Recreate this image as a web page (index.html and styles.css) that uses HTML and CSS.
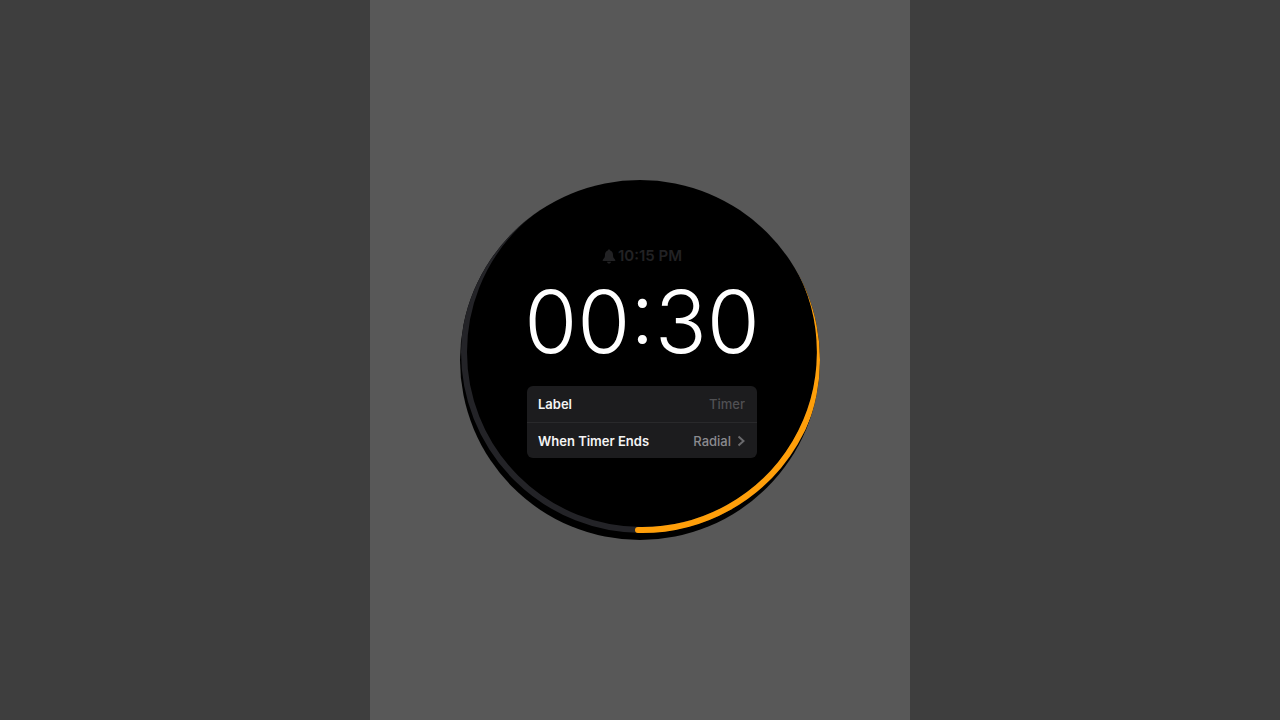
FILE: index.html
```
<!DOCTYPE html>
<html lang="en">

<head>
    <meta charset="UTF-8" />
    <meta name="viewport" content="width=device-width, initial-scale=1.0" />
    <title>Timer</title>
    <link rel="stylesheet" href="styles.css">
</head>

<body>
    <main class="stage">
        <div class="dial">
            <svg class="ring" viewBox="0 0 360 360" aria-hidden="true">
                <circle class="ring-track" cx="182" cy="172" r="178" />
                <path class="ring-progress" d="M178 350 A178 178 0 0 0 336 83" />
            </svg>

            <div class="content">
                <p class="end-time">
                    <svg class="bell" viewBox="0 0 14 15" aria-hidden="true">
                        <path d="M7 0.5C6.2 0.5 5.7 1 5.6 1.7C3.8 2.3 3 3.8 3 5.8C3 8.3 2.5 9 1.2 10.2C0.2 11.2 0.4 12 1.5 12H12.5C13.6 12 13.8 11.2 12.8 10.2C11.5 9 11 8.3 11 5.8C11 3.8 10.2 2.3 8.4 1.7C8.3 1 7.8 0.5 7 0.5Z" />
                        <path d="M5 12.8H9C8.8 14 8 14.6 7 14.6C6 14.6 5.2 14 5 12.8Z" />
                    </svg>
                    <span>10:15 PM</span>
                </p>
                <h1 class="time">00:30</h1>

                <form class="options">
                    <div class="row">
                        <label for="timerLabel">Label</label>
                        <input type="text" id="timerLabel" placeholder="Timer" />
                    </div>
                    <div class="row">
                        <label for="timerSound">When Timer Ends</label>
                        <button type="button" id="timerSound">
                            Radial
                            <svg class="chevron" viewBox="0 0 8 12" aria-hidden="true">
                                <path d="M1.5 1.5L6.5 6L1.5 10.5" />
                            </svg>
                        </button>
                    </div>
                </form>
            </div>
        </div>
    </main>
</body>

</html>
```

FILE: styles.css
```
* {
    box-sizing: border-box;
    margin: 0;
    padding: 0;
    font-family: Inter, "Liberation Sans", sans-serif;
}

body {
    background-color: #3e3e3e;
    display: flex;
    justify-content: center;
    min-height: 100vh;
}

.stage {
    width: 75vh;
    background-color: #585858;
    display: flex;
    align-items: center;
    justify-content: center;
}

.dial {
    width: 50vh;
    min-width: 300px;
    aspect-ratio: 1;
    position: relative;
    overflow: hidden;
    border-radius: 50%;
    background-color: #000;
    display: flex;
    align-items: center;
    justify-content: center;
}

.ring {
    position: absolute;
    top: 0;
    left: 0;
    width: 100%;
    height: 100%;
    fill: none;
    stroke-width: 6;
}

.ring-track {
    stroke: #232327;
}

.ring-progress {
    stroke: #ff9f0a;
    stroke-linecap: round;
}

.content {
    position: relative;
    width: 65%;
    padding: 0 0 16px 4px;
    display: flex;
    flex-direction: column;
    align-items: center;
}

.end-time {
    display: flex;
    align-items: center;
    gap: 2px;
    color: #222224;
    font-size: 15px;
    font-weight: 600;
    line-height: 20px;
}

.bell {
    width: 14px;
    height: 15px;
    fill: #222224;
}

.time {
    color: #fff;
    font-size: 86px;
    font-weight: 300;
    line-height: 96px;
    margin: 8px 0 16px;
}

.options {
    width: 100%;
    background-color: #1c1c1e;
    border-radius: 6px;
}

.row {
    display: flex;
    align-items: center;
    justify-content: space-between;
    height: 36px;
    padding: 0 12px 0 11px;
    font-size: 13px;
}

.row + .row {
    border-top: 1px solid #29292b;
}

.row label {
    color: #f4f4f4;
    font-weight: 600;
    white-space: nowrap;
}

.row input,
.row button {
    border: none;
    background-color: transparent;
    font-size: 13px;
    font-weight: 500;
}

.row input {
    width: 50%;
    color: #8a8a8e;
    text-align: right;
    outline: none;
}

.row input::placeholder {
    color: #505053;
}

.row button {
    display: flex;
    align-items: center;
    gap: 6px;
    color: #8a8a8e;
    cursor: pointer;
}

.chevron {
    width: 8px;
    height: 12px;
    fill: none;
    stroke: #69696c;
    stroke-width: 2;
}
```
